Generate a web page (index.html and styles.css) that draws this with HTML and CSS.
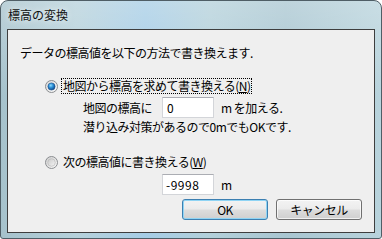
FILE: index.html
```html
<!DOCTYPE html>
<html lang="ja">
<head>
    <meta charset="UTF-8">
    <title>標高の変換</title>
    <link rel="stylesheet" href="styles.css">
</head>
<body>

    <div class="window">
        <div class="titlebar">標高の変換</div>
        <div class="client">
            <p class="intro">データの標高値を以下の方法で書き換えます.</p>

            <div class="option">
                <svg class="radio" width="13" height="13" viewBox="0 0 13 13">
                    <defs>
                        <linearGradient id="ring" x1="0" y1="0" x2="1" y2="1">
                            <stop offset="0" stop-color="#d6d6d6"/>
                            <stop offset="1" stop-color="#ffffff"/>
                        </linearGradient>
                        <radialGradient id="dot" cx="0.4" cy="0.35" r="0.7">
                            <stop offset="0" stop-color="#8fdcff"/>
                            <stop offset="0.45" stop-color="#2b8fd6"/>
                            <stop offset="1" stop-color="#0b3f80"/>
                        </radialGradient>
                    </defs>
                    <circle cx="6.5" cy="6.5" r="6" fill="url(#ring)" stroke="#8a8d90"/>
                    <circle cx="6.5" cy="6.5" r="3.6" fill="url(#dot)" stroke="#1f4f88" stroke-width="0.6"/>
                </svg>
                <span class="label focus">地図から標高を求めて書き換える(<u>N</u>)</span>
            </div>
            <div class="sub">
                <div class="row">
                    <span class="caption">地図の標高に</span>
                    <span class="input">0</span>
                    <span class="unit">m を加える.</span>
                </div>
                <p class="note">潜り込み対策があるので0mでもOKです.</p>
            </div>

            <div class="option second">
                <svg class="radio" width="13" height="13" viewBox="0 0 13 13">
                    <defs>
                        <linearGradient id="ring2" x1="0" y1="0" x2="1" y2="1">
                            <stop offset="0" stop-color="#cfcfcf"/>
                            <stop offset="1" stop-color="#fbfbfb"/>
                        </linearGradient>
                        <linearGradient id="well" x1="0" y1="0" x2="1" y2="1">
                            <stop offset="0" stop-color="#c9c9c9"/>
                            <stop offset="1" stop-color="#f4f4f4"/>
                        </linearGradient>
                    </defs>
                    <circle cx="6.5" cy="6.5" r="6" fill="url(#ring2)" stroke="#8a8d90"/>
                    <circle cx="6.5" cy="6.5" r="3.8" fill="url(#well)" stroke="#b4b4b4" stroke-width="0.6"/>
                </svg>
                <span class="label">次の標高値に書き換える(<u>W</u>)</span>
            </div>
            <div class="sub">
                <div class="row">
                    <span class="input pad">-9998</span>
                    <span class="unit">m</span>
                </div>
            </div>

            <div class="buttons">
                <div class="btn default">OK</div>
                <div class="btn">キャンセル</div>
            </div>
        </div>
    </div>

</body>
</html>
```

FILE: styles.css
```css
body {
    margin: 0;
    font-family: "Noto Sans CJK JP", "Noto Sans", sans-serif;
    font-size: 12px;
    color: #000;
    background-color: #fff;
}
p {
    margin: 0;
}
.window {
    box-sizing: border-box;
    width: 382px;
    height: 239px;
    padding: 0 7px 6px 7px;
    border: 1px solid #4f5e66;
    border-radius: 8px 8px 3px 3px;
    background:
        linear-gradient(to bottom, rgba(255,255,255,0.25), rgba(255,255,255,0) 40%),
        linear-gradient(to right, #a6c2cc 0%, #b6d1db 20%, #a6cde6 38%, #b3d0da 55%, #a9c6d1 75%, #b8d3dc 100%);
}
.titlebar {
    height: 28px;
    line-height: 28px;
    color: #111;
    text-shadow: 0 0 6px rgba(255,255,255,0.9);
}
.client {
    box-sizing: border-box;
    width: 368px;
    height: 204px;
    margin-left: -1px;
    padding: 15px 12px 0 12px;
    border: 1px solid #3e3e3e;
    background-color: #efefef;
    letter-spacing: -0.5px;
}
.intro {
    line-height: 16px;
}
.option {
    display: flex;
    align-items: center;
    height: 16px;
    margin: 17px 0 0 25px;
}
.option.second {
    margin-top: 19px;
}
.radio {
    display: block;
    margin-right: 3px;
}
.label {
    line-height: 14px;
    padding: 0 1px;
    border: 1px solid transparent;
}
.label.focus {
    border: 1px dotted #000;
}
.sub {
    margin-left: 63px;
}
.row {
    display: flex;
    align-items: center;
    height: 21px;
    margin-top: 3px;
}
.option.second + .sub .row {
    margin-top: 4px;
}
.caption {
    width: 79px;
}
.input {
    box-sizing: border-box;
    width: 52px;
    height: 21px;
    line-height: 19px;
    padding-left: 4px;
    background-color: #fff;
    border: 1px solid #d3d5d9;
    border-top-color: #abadb3;
    letter-spacing: 0.5px;
}
.input.pad {
    margin-left: 79px;
    padding-left: 3px;
}
.unit {
    margin-left: 7px;
}
.note {
    line-height: 16px;
    margin-top: 1px;
}
.buttons {
    display: flex;
    justify-content: flex-end;
    gap: 8px;
    margin-top: 4px;
}
.btn {
    box-sizing: border-box;
    width: 86px;
    height: 21px;
    line-height: 19px;
    text-align: center;
    border: 1px solid #707070;
    border-radius: 3px;
    background: linear-gradient(to bottom, #f3f3f3 0%, #ebebeb 48%, #dddddd 52%, #cfcfcf 100%);
    box-shadow: inset 0 0 0 1px rgba(255,255,255,0.7);
}
.btn.default {
    border-color: #3c7fb1;
    box-shadow: inset 0 0 0 1px #8fd4f4;
}
```
